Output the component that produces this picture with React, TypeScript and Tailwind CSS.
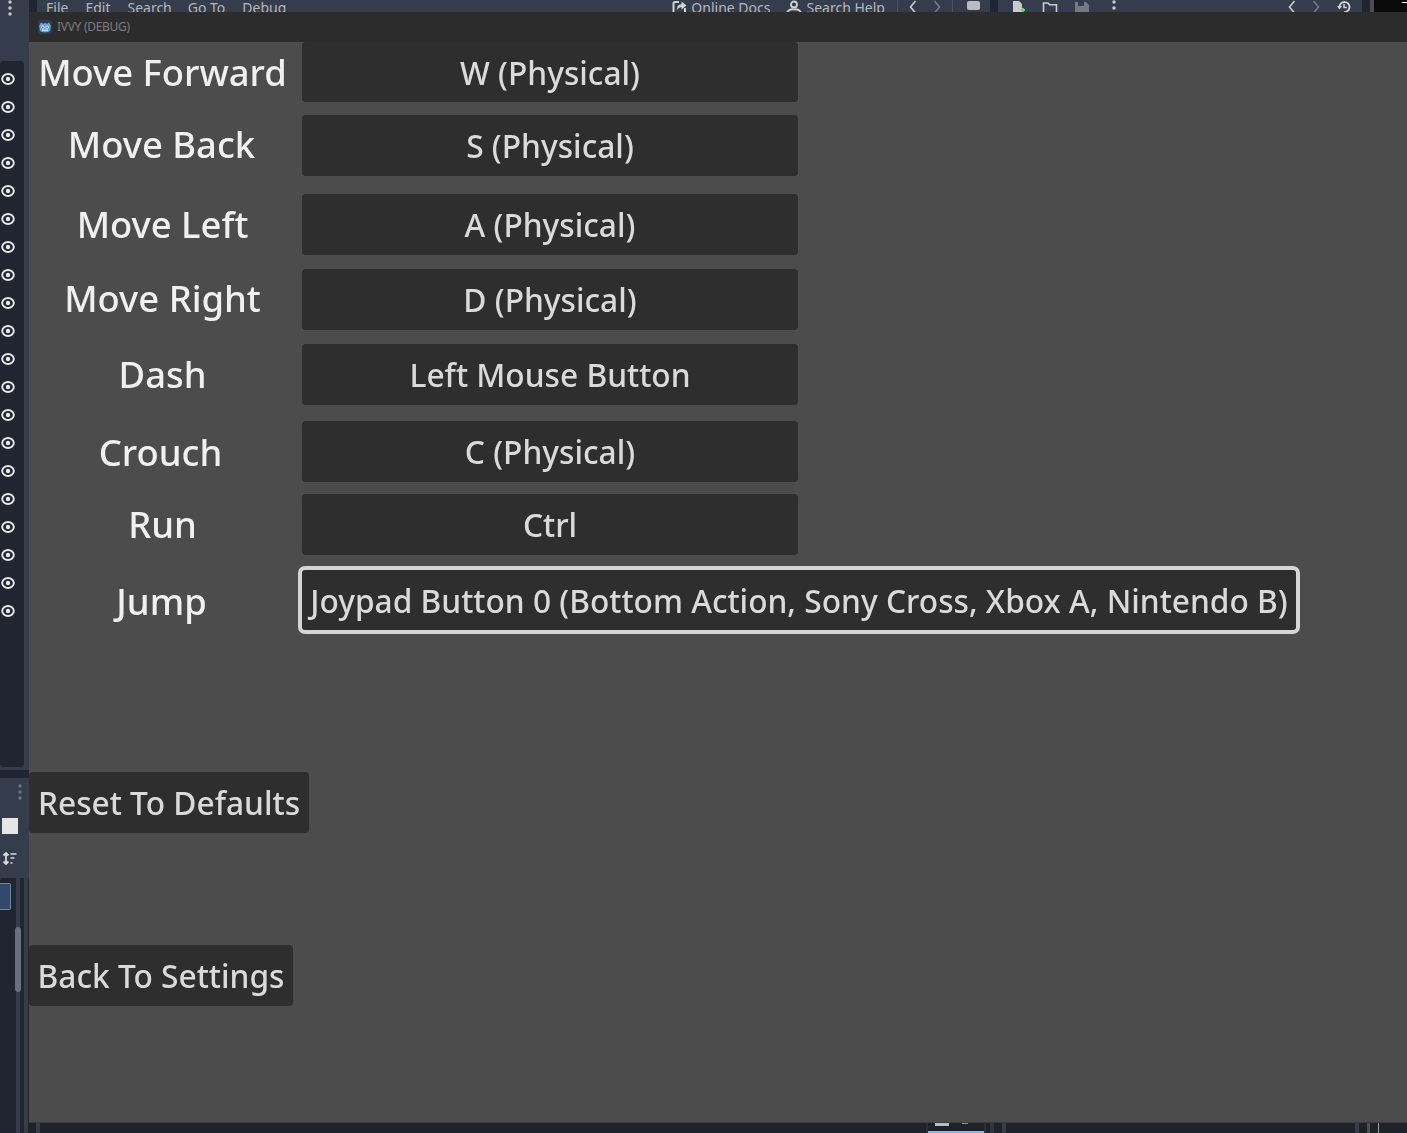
const bindings = [
	{ label: "Move Forward", key: "W (Physical)", rowClass: "h-[60px]", labelClass: "", keyClass: "pt-[2px]" },
	{ label: "Move Back", key: "S (Physical)", rowClass: "mt-[13px] h-[61px]", labelClass: "pb-[2px] pr-[2px]", keyClass: "" },
	{ label: "Move Left", key: "A (Physical)", rowClass: "mt-[18px] h-[61px]", labelClass: "", keyClass: "" },
	{ label: "Move Right", key: "D (Physical)", rowClass: "mt-[14px] h-[61px]", labelClass: "pb-[2px]", keyClass: "" },
	{ label: "Dash", key: "Left Mouse Button", rowClass: "mt-[14px] h-[61px]", labelClass: "", keyClass: "" },
	{ label: "Crouch", key: "C (Physical)", rowClass: "mt-[16px] h-[61px]", labelClass: "pr-[4px] pt-[2px]", keyClass: "" },
	{ label: "Run", key: "Ctrl", rowClass: "mt-[12px] h-[61px]", labelClass: "", keyClass: "" },
];

const eyes = Array.from({ length: 20 }, (_, i) => i);

function Eye() {
	return (
		<svg width="14" height="12" viewBox="0 0 14 12" className="shrink-0">
			<ellipse cx="7" cy="6" rx="5.8" ry="5" fill="none" stroke="#e6e8ea" strokeWidth="1.9" />
			<circle cx="7" cy="6" r="2.2" fill="#e6e8ea" />
		</svg>
	);
}

function Dots({ color }: { color: string }) {
	return (
		<svg width="4" height="16" viewBox="0 0 4 16">
			<circle cx="2" cy="2" r="1.7" fill={color} />
			<circle cx="2" cy="8" r="1.7" fill={color} />
			<circle cx="2" cy="14" r="1.7" fill={color} />
		</svg>
	);
}

function GodotIcon() {
	return (
		<svg width="14" height="14" viewBox="0 0 14 14" className="rounded-[2px] bg-[#2d3a4f]">
			<path d="M3 2.5 L5 3.8 L7 3 L9 3.8 L11 2.5 L12.8 5.5 L12.2 11 L9 12.2 L5 12.2 L1.8 11 L1.2 5.5 Z" fill="#5fa5d8" />
			<circle cx="4.8" cy="7.2" r="1.6" fill="#e6eef5" />
			<circle cx="9.2" cy="7.2" r="1.6" fill="#e6eef5" />
			<circle cx="4.9" cy="7.3" r="0.7" fill="#2d3a4f" />
			<circle cx="9.1" cy="7.3" r="0.7" fill="#2d3a4f" />
			<path d="M4 10.2 H10" stroke="#e6eef5" strokeWidth="1" />
		</svg>
	);
}

function Chevron({ dir, color }: { dir: "l" | "r"; color: string }) {
	return (
		<svg width="8" height="14" viewBox="0 0 8 14">
			<path d={dir === "l" ? "M6.5 1 L1.5 7 L6.5 13" : "M1.5 1 L6.5 7 L1.5 13"} fill="none" stroke={color} strokeWidth="1.6" />
		</svg>
	);
}

function DocsIcon() {
	return (
		<svg width="15" height="15" viewBox="0 0 15 15" className="mt-[2px]">
			<path d="M7 2 H3 Q1.5 2 1.5 3.5 V12 Q1.5 13.5 3 13.5 H11.5 Q13 13.5 13 12 V8" fill="none" stroke="#d0d2d6" strokeWidth="2" />
			<path d="M5 10 L5.5 6 Q7 4.2 9.5 4.2 V1.5 L14.5 5.5 L9.5 9.5 V7 Q7 7 5 10 Z" fill="#d0d2d6" />
		</svg>
	);
}

function HelpIcon() {
	return (
		<svg width="16" height="15" viewBox="0 0 16 15" className="mt-[2px]">
			<circle cx="8" cy="4.5" r="3" fill="none" stroke="#d0d2d6" strokeWidth="1.8" />
			<path d="M1 12 Q4 8.5 8 9.5 Q12 8.5 15 12" fill="none" stroke="#d0d2d6" strokeWidth="1.8" />
		</svg>
	);
}

function TopBar() {
	return (
		<div className="flex h-[12px] shrink-0 overflow-hidden bg-[#353c4b]">
			<div className="h-full w-[8px] bg-[#1f2532]" />
			<div className="flex flex-1 items-start -mt-[2px] text-[14px] leading-[19px] text-[#b4b7bd]">
				<span className="ml-[9px]">File</span>
				<span className="ml-[17px]">Edit</span>
				<span className="ml-[17px]">Search</span>
				<span className="ml-[16px]">Go To</span>
				<span className="ml-[17px]">Debug</span>
				<div className="ml-[386px]"><DocsIcon /></div>
				<span className="ml-[4px]">Online Docs</span>
				<div className="ml-[16px]"><HelpIcon /></div>
				<span className="ml-[4px]">Search Help</span>
				<div className="ml-[12px] h-[16px] w-px bg-[#4a515f]" />
				<div className="ml-[11px] mt-[2px]"><Chevron dir="l" color="#c9cbd0" /></div>
				<div className="ml-[16px] mt-[2px]"><Chevron dir="r" color="#737985" /></div>
				<div className="ml-[11px] h-[16px] w-px bg-[#4a515f]" />
				<div className="ml-[14px] mt-[3px] h-[9px] w-[13px] rounded-[2px] bg-[#b9bbbf]" />
				<div className="ml-[10px] h-[16px] w-[8px] bg-[#1f2532]" />
				<svg width="14" height="15" viewBox="0 0 14 15" className="ml-[14px] mt-[2px]">
					<path d="M1 1 H7 L10 4 V12 H1 Z" fill="#c9cbd0" />
					<path d="M9 10 H13 M11 8 V13" stroke="#5fdd6a" strokeWidth="1.8" />
				</svg>
				<svg width="16" height="15" viewBox="0 0 16 15" className="ml-[16px] mt-[2px]">
					<path d="M1.5 3 H6 L7.5 4.8 H14.5 V13 H1.5 Z" fill="none" stroke="#c9cbd0" strokeWidth="1.6" />
				</svg>
				<svg width="16" height="15" viewBox="0 0 16 15" className="ml-[16px] mt-[2px]">
					<path d="M1 2 H12 L15 5 V14 H1 Z" fill="#737985" />
					<rect x="4" y="2" width="6" height="4" fill="#353c4b" />
				</svg>
				<div className="ml-[22px] mt-[2px]"><Dots color="#c9cbd0" /></div>
				<div className="ml-[172px] mt-[2px]"><Chevron dir="l" color="#c9cbd0" /></div>
				<div className="ml-[16px] mt-[2px]"><Chevron dir="r" color="#737985" /></div>
				<svg width="14" height="14" viewBox="0 0 14 14" className="ml-[17px] mt-[2px]">
					<path d="M2.5 7 A5 5 0 1 1 7 12" fill="none" stroke="#d5d6d9" strokeWidth="1.8" />
					<path d="M0 6 H5 L2.5 9.5 Z" fill="#d5d6d9" />
					<path d="M7 4 V7.5 H9.8" fill="none" stroke="#d5d6d9" strokeWidth="1.5" />
				</svg>
			</div>
			<div className="h-full w-[8px] bg-[#1f2532]" />
			<div className="h-full w-[4px] bg-[#4a4d52]" />
			<div className="flex h-full w-[33px] justify-end bg-[#0b0b0b] pt-[2px]">
				<div className="h-px w-[5px] bg-white" />
			</div>
		</div>
	);
}

function LeftStrip() {
	return (
		<div className="flex h-full w-[29px] shrink-0 flex-col overflow-hidden bg-[#353c4b]">
			<div className="flex h-[61px] shrink-0 flex-col pl-[8px]">
				<Dots color="#c6c8cc" />
			</div>
			<div className="flex h-[706px] w-[24px] shrink-0 flex-col items-start gap-[16px] rounded-[3px] bg-[#20252f] pl-px pt-[12px]">
				{eyes.map((i) => (
					<Eye key={i} />
				))}
			</div>
			<div className="mt-[3px] h-[8px] shrink-0 bg-[#1f2532]" />
			<div className="flex h-[100px] shrink-0 flex-col">
				<div className="flex justify-end pr-[7px] pt-[6px]">
					<Dots color="#6e7480" />
				</div>
				<div className="ml-[2px] mt-[18px] h-[16px] w-[16px] bg-[#e6e6e6]" />
				<svg width="16" height="16" viewBox="0 0 16 16" className="ml-[2px] mt-[17px]">
					<path d="M4 2 V13 M1.5 4.5 L4 2 L6.5 4.5 M1.5 10.5 L4 13 L6.5 10.5" fill="none" stroke="#d8dade" strokeWidth="1.8" />
					<path d="M8.5 3 H14.5 M8.5 7 H12.5 M8.5 12 H10.5" stroke="#d8dade" strokeWidth="1.5" />
				</svg>
			</div>
			<div className="flex flex-1 rounded-t-[3px] bg-[#20252f]">
				<div className="w-[16px]">
					<div className="mt-[5px] h-[27px] w-[11px] rounded-r-[2px] border border-l-0 border-[#6d86a6] bg-[#33496a]" />
				</div>
				<div className="w-[4px] bg-[#363c48] pt-[49px]">
					<div className="-ml-px h-[65px] w-[6px] rounded-[3px] bg-[#6a6f78]" />
				</div>
				<div className="w-[4px]" />
				<div className="w-[4px] bg-[#363c48]" />
			</div>
		</div>
	);
}

function BottomStrip() {
	return (
		<div className="flex h-[11px] shrink-0 border-t border-[#3a3d42] bg-[#1d222b]">
			<div className="ml-[7px] w-[4px] bg-[#363c48]" />
			<div className="ml-[886px] w-[60px] border-x-2 border-[#2a303b]">
				<div className="flex">
					<div className="ml-[7px] h-[3px] w-[14px] bg-[#b9bbbf]" />
					<div className="ml-[13px] h-px w-[6px] bg-[#5c9fd8]" />
				</div>
				<div className="mt-[5px] h-[2px] bg-[#74bdfa]" />
			</div>
			<div className="ml-[4px] w-[4px] bg-[#2f3540]" />
			<div className="ml-[8px] w-[4px] bg-[#363c48]" />
			<div className="ml-[349px] w-[4px] bg-[#363c48]" />
			<div className="ml-[8px] w-[3px] bg-[#4a4d52]" />
			<div className="ml-[8px] w-px bg-[#9a9ca0]" />
		</div>
	);
}

export default function App() {
	return (
		<div className="flex h-[1133px] w-[1407px] overflow-hidden bg-[#20252f] [font-family:'Noto_Sans',sans-serif]">
			<LeftStrip />
			<div className="flex min-w-0 flex-1 flex-col">
				<TopBar />
				<div className="flex h-[30px] shrink-0 items-center gap-[5px] bg-[#2c2c2c] pl-[9px] text-[12px] text-[#7d7d7d]">
					<GodotIcon />
					<span className="w-[72px] whitespace-nowrap tracking-[-0.3px]">IVVY (DEBUG)</span>
				</div>
				<main className="flex min-h-0 flex-1 flex-col bg-[#4c4c4c]">
					<div className="flex flex-1 flex-col text-[31.7px] font-medium leading-none text-[#dadada] blur-[0.4px]">
						{bindings.map((b) => (
							<div key={b.label} className={`flex ${b.rowClass}`}>
								<div className={`flex w-[267px] items-center justify-center text-[36.4px] text-[#f0f0f0] ${b.labelClass}`}>{b.label}</div>
								<div className={`ml-[6px] flex w-[496px] items-center justify-center rounded-[4px] bg-[#2e2e2e] ${b.keyClass}`}>{b.key}</div>
							</div>
						))}
						<div className="mt-[11px] flex h-[68px]">
							<div className="flex w-[265px] items-center justify-center pt-[3px] text-[36.4px] text-[#f0f0f0]">Jump</div>
							<div className="ml-[4px] flex w-[1002px] items-center justify-center whitespace-nowrap rounded-[7px] border-4 border-[#d6d6d6] bg-[#2e2e2e] pt-[1px]">
								Joypad Button 0 (Bottom Action, Sony Cross, Xbox A, Nintendo B)
							</div>
						</div>
						<button className="mt-[138px] flex h-[61px] w-[280px] items-center justify-center rounded-[4px] bg-[#2e2e2e]">Reset To Defaults</button>
						<button className="mt-[112px] flex h-[61px] w-[264px] items-center justify-center rounded-[4px] bg-[#2e2e2e]">Back To Settings</button>
					</div>
				</main>
				<BottomStrip />
			</div>
		</div>
	);
}
